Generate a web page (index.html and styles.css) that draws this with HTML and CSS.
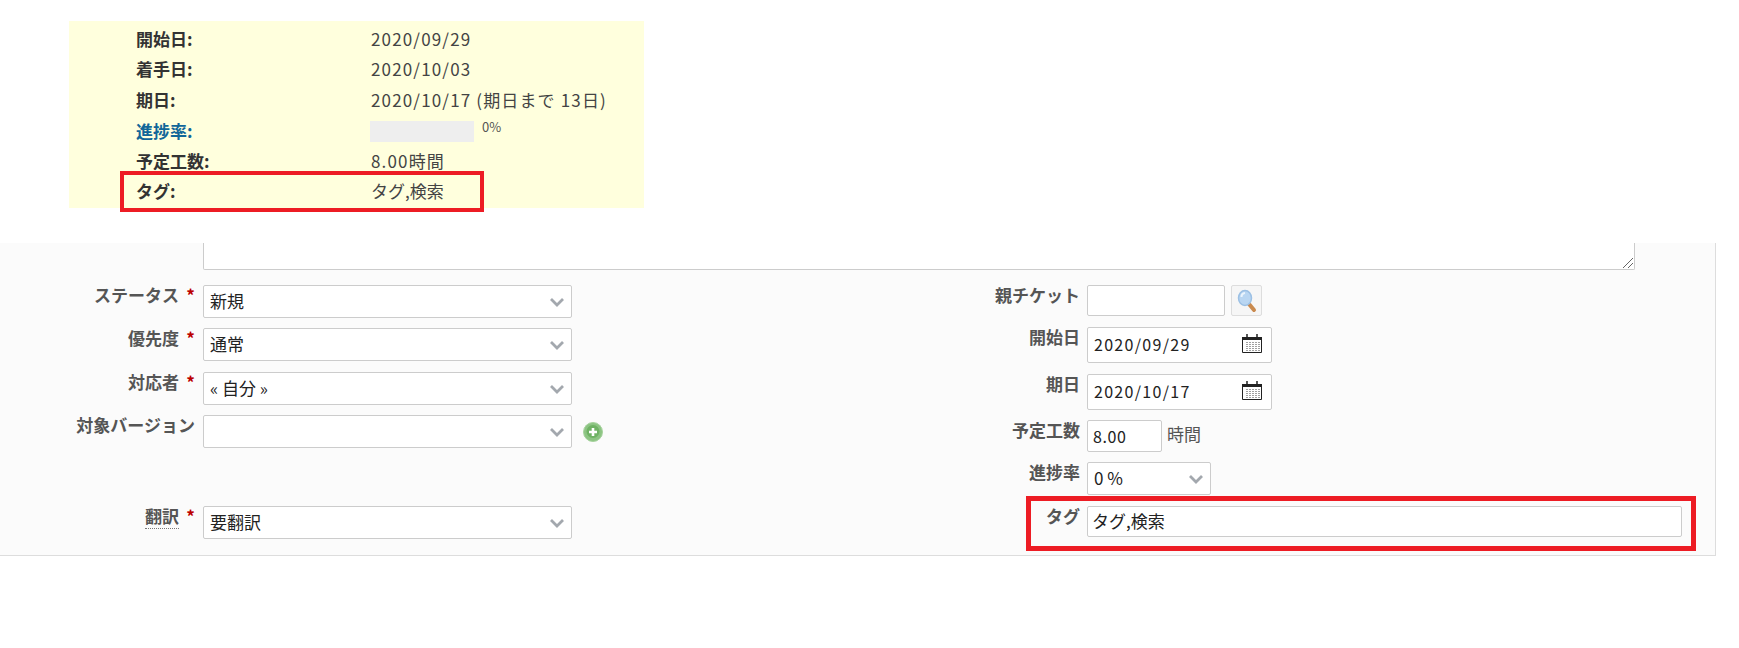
FILE: index.html
```html
<!DOCTYPE html>
<html lang="ja">
<head>
<meta charset="utf-8">
<title>チケット</title>
<link rel="stylesheet" href="styles.css">
</head>
<body>
<div class="attrs">
  <div class="attrs-grid">
    <div class="k">開始日:</div><div class="v num">2020/09/29</div>
    <div class="k">着手日:</div><div class="v num">2020/10/03</div>
    <div class="k">期日:</div><div class="v num">2020/10/17 (期日まで 13日)</div>
    <div class="k link">進捗率:</div>
    <div class="v progress"><span class="bar"></span><span class="pct">0%</span></div>
    <div class="k">予定工数:</div><div class="v num">8.00時間</div>
    <div class="k">タグ:</div><div class="v">タグ,検索</div>
  </div>
  <div class="mark mark-top"></div>
</div>

<form class="form">
  <div class="desc">
    <svg class="grip" width="12" height="12" viewBox="0 0 12 12"><path d="M1 11 11 1M6 11l5-5" stroke="#666" stroke-width="1" fill="none"/></svg>
  </div>
  <div class="cols">
    <div class="col col-left">
      <div class="row"><label class="lab">ステータス<i class="req">*</i></label>
        <div class="sel w-369"><select><option>新規</option></select><svg class="chev" width="16" height="10" viewBox="0 0 16 10"><path d="M2 2l6 6 6-6" stroke="#a3a8ae" stroke-width="2.8" fill="none"/></svg></div></div>
      <div class="row"><label class="lab">優先度<i class="req">*</i></label>
        <div class="sel w-369"><select><option>通常</option></select><svg class="chev" width="16" height="10" viewBox="0 0 16 10"><path d="M2 2l6 6 6-6" stroke="#a3a8ae" stroke-width="2.8" fill="none"/></svg></div></div>
      <div class="row"><label class="lab">対応者<i class="req">*</i></label>
        <div class="sel w-369"><select><option>« 自分 »</option></select><svg class="chev" width="16" height="10" viewBox="0 0 16 10"><path d="M2 2l6 6 6-6" stroke="#a3a8ae" stroke-width="2.8" fill="none"/></svg></div></div>
      <div class="row"><label class="lab">対象バージョン</label>
        <div class="sel w-369"><select><option></option></select><svg class="chev" width="16" height="10" viewBox="0 0 16 10"><path d="M2 2l6 6 6-6" stroke="#a3a8ae" stroke-width="2.8" fill="none"/></svg></div>
        <svg class="plus" width="20" height="20" viewBox="0 0 20 20">
          <circle cx="10" cy="10" r="9.5" fill="#8cc482" stroke="#a6d29d" stroke-width="1"/>
          <circle cx="10" cy="9.5" r="6.5" fill="#6fb264"/>
          <path d="M10 6v8M6 10h8" stroke="#fff" stroke-width="2.6"/>
        </svg></div>
      <div class="row"><label class="lab"><span class="dotted">翻訳</span><i class="req">*</i></label>
        <div class="sel w-369"><select><option>要翻訳</option></select><svg class="chev" width="16" height="10" viewBox="0 0 16 10"><path d="M2 2l6 6 6-6" stroke="#a3a8ae" stroke-width="2.8" fill="none"/></svg></div></div>
    </div>
    <div class="col col-right">
      <div class="row"><label class="lab">親チケット</label>
        <input class="inp h-31 w-138" type="text">
        <button class="find" type="button"><svg width="20" height="24" viewBox="0 0 20 24">
          <path d="M12 15l5 6" stroke="#c98a4e" stroke-width="4" stroke-linecap="round"/>
          <ellipse cx="8" cy="9" rx="6.5" ry="7.5" fill="#b9d6f2" stroke="#9cc0e4" stroke-width="1.5"/>
          <path d="M4.5 8a4 4 0 0 1 3.5-4" stroke="#eaf4fd" stroke-width="2" fill="none"/>
        </svg></button></div>
      <div class="row"><label class="lab">開始日</label>
        <div class="date"><input class="inp h-36 w-185 spaced" type="text" value="2020/09/29">
          <svg class="cal" width="20" height="19" viewBox="0 0 20 19"><path d="M.5 3.5h19v15H.5z" fill="#fff" stroke="#222"/><path d="M0 3h20v3H0z" fill="#222"/><path d="M5 0v4M15 0v4" stroke="#222" stroke-width="1.5"/><path d="M5 8v9M8 8v9M11 8v9M14 8v9M17 8v9" stroke="#444" stroke-dasharray="1 1"/></svg></div></div>
      <div class="row"><label class="lab">期日</label>
        <div class="date"><input class="inp h-36 w-185 spaced" type="text" value="2020/10/17">
          <svg class="cal" width="20" height="19" viewBox="0 0 20 19"><path d="M.5 3.5h19v15H.5z" fill="#fff" stroke="#222"/><path d="M0 3h20v3H0z" fill="#222"/><path d="M5 0v4M15 0v4" stroke="#222" stroke-width="1.5"/><path d="M5 8v9M8 8v9M11 8v9M14 8v9M17 8v9" stroke="#444" stroke-dasharray="1 1"/></svg></div></div>
      <div class="row"><label class="lab">予定工数</label>
        <input class="inp h-32 w-75 hours" type="text" value="8.00"><span class="unit">時間</span></div>
      <div class="row"><label class="lab">進捗率</label>
        <div class="sel w-124"><select><option>0 %</option></select><svg class="chev" width="16" height="10" viewBox="0 0 16 10"><path d="M2 2l6 6 6-6" stroke="#a3a8ae" stroke-width="2.8" fill="none"/></svg></div></div>
      <div class="row row-tag"><label class="lab">タグ</label>
        <input class="inp h-31 w-595 tight" type="text" value="タグ,検索">
        <div class="mark mark-form"></div></div>
    </div>
  </div>
</form>
</body>
</html>
```
FILE: styles.css
```css
* { box-sizing: border-box; }
html, body { margin: 0; padding: 0; background: #fff; }
body {
  height: 648px;
  overflow: hidden;
  font-family: "Noto Sans CJK JP", "Liberation Sans", sans-serif;
  font-size: 17px;
  color: #333;
  padding-top: 21px;
}
.attrs {
  position: relative;
  margin-left: 69px;
  width: 575px;
  height: 187px;
  background: #ffd;
  padding: 3px 0 0 67px;
}
.attrs-grid {
  display: grid;
  grid-template-columns: 234px 1fr;
  grid-template-rows: 30px 29px 33px 29px 31px 30px;
  align-items: center;
  line-height: 22px;
}
.k { font-weight: 700; color: #333; }
.k.link { color: #169; }
.v { color: #444; padding-left: 1px; }
.num { letter-spacing: 1.15px; }
.progress { display: flex; align-items: flex-start; height: 100%; padding-left: 0; }
.bar { display: block; width: 104px; height: 21px; margin-top: 5px; background: #eee; }
.pct { font-size: 13px; line-height: 16px; margin: 3px 0 0 8px; color: #555; }

.mark { position: absolute; border: 4px solid #ed1c24; pointer-events: none; }
.mark-top { left: 51px; top: 150px; width: 364px; height: 41px; }
.mark-form { left: 156px; top: -10px; width: 670px; height: 55px; border-width: 5px; }

.form {
  margin-top: 35px;
  width: 1716px;
  height: 313px;
  background: #fbfbfb;
  border-right: 1px solid #ddd;
  border-bottom: 1px solid #ddd;
}
.desc {
  position: relative;
  margin-left: 203px;
  width: 1432px;
  height: 27px;
  background: #fff;
  border: 1px solid #ccc;
  border-top: 0;
  border-radius: 0 0 2px 2px;
}
.grip { position: absolute; right: 0; bottom: 0; }
.cols { display: flex; padding-top: 15px; }
.col { display: grid; }
.col-left { width: 870px; grid-template-rows: 43px 44px 43px 91px auto; }
.col-right { grid-template-rows: 42px 47px 46px 42px 44px auto; }
.row { display: flex; align-items: flex-start; gap: 7px; position: relative; }
.col-left .row { gap: 8px; }
.lab {
  display: block;
  font-weight: 700;
  color: #555;
  line-height: 20px;
  text-align: right;
  white-space: nowrap;
}
.col-left .lab { width: 195px; }
.col-right .lab { width: 210px; }
.req { font-style: normal; color: #b00; margin-left: 7px; display: inline-block; width: 9px; text-align: center; }
.dotted { border-bottom: 1px dotted #777; padding-bottom: 2px; display: inline-block; line-height: 20px; }

.sel { position: relative; height: 33px; }
.w-369 { width: 369px; }
.w-124 { width: 124px; }
select, .inp {
  font-family: inherit;
  font-size: 17px;
  color: #222;
  background: #fff;
  border: 1px solid #ccc;
  border-radius: 2px;
  margin: 0;
  outline: none;
}
select {
  display: block;
  width: 100%;
  height: 100%;
  appearance: none;
  -webkit-appearance: none;
  padding: 0 0 2px 6px;
  line-height: 29px;
}
.chev { position: absolute; right: 7px; top: 12px; }
.plus { margin: 7px 0 0 3px; }

.inp { display: block; padding: 0 5px; }
.h-31 { height: 31px; }
.h-32 { height: 32px; }
.h-36 { height: 36px; }
.w-138 { width: 138px; }
.w-185 { width: 185px; }
.w-75 { width: 75px; }
.w-595 { width: 595px; }
.tight { padding-left: 4px; padding-bottom: 2px; }
.spaced { letter-spacing: 1.3px; font-size: 16px; padding-left: 6px; padding-bottom: 2px; }
.hours { letter-spacing: .6px; font-size: 16px; padding-bottom: 1px; }
.unit { color: #555; line-height: 28px; margin-left: -2px; }
.find {
  width: 31px;
  height: 31px;
  padding: 0;
  margin-left: -1px;
  background: #f6f6f6;
  border: 1px solid #ddd;
  border-radius: 2px;
  display: flex;
  align-items: center;
  justify-content: center;
}
.date { position: relative; }
.cal { position: absolute; right: 10px; top: 7px; }
```
